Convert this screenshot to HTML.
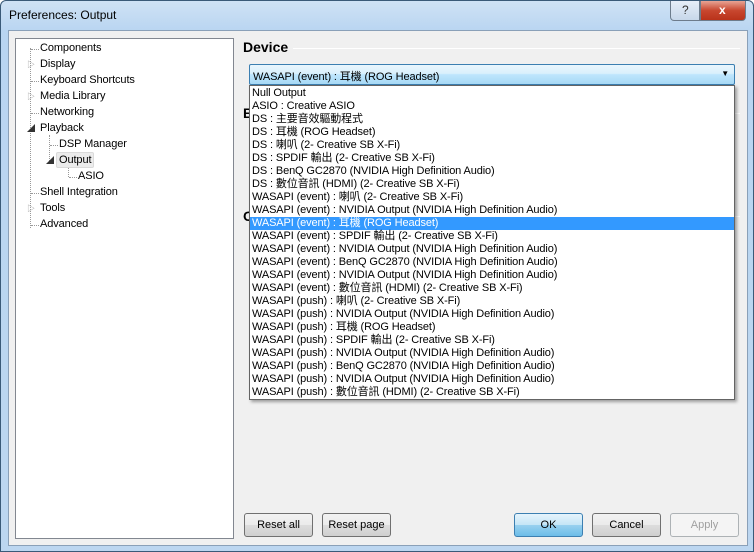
<!DOCTYPE html>
<html><head><meta charset="utf-8"><style>
*{margin:0;padding:0;box-sizing:border-box}
body{width:754px;height:552px;overflow:hidden;background:#fff;font-family:"Liberation Sans","Noto Sans CJK TC",sans-serif;font-size:11px;color:#000;position:relative}
.win{position:absolute;left:0;top:0;width:754px;height:552px;border:1px solid #3a5a78;border-radius:6px 6px 0 0;background:linear-gradient(#cfe2f5,#b9d5f1 30px,#bcd6f0)}
.title{position:absolute;left:8px;top:7px;font-size:12px;color:#000}
.client{position:absolute;left:7px;top:29px;width:740px;height:516px;background:#f0f0f0;border:1px solid #8aa0b8}
.tree{position:absolute;left:14px;top:37px;width:219px;height:501px;background:#fff;border:1px solid #828790}
.ti{position:absolute;font-size:11px;white-space:nowrap;letter-spacing:-0.1px}
.dot{position:absolute;border-top:1px dotted #999}
.vd{position:absolute;border-left:1px dotted #999}
.tri{position:absolute;font-size:8px;color:#999}
h3{position:absolute;font-size:14px;font-weight:bold}
.hl{position:absolute;height:1px;background:#c8c8c8;border-bottom:1px solid #fff}
.combo{position:absolute;left:248px;top:63px;width:486px;height:21px;border:1px solid #3c7fb1;border-radius:2px;background:linear-gradient(#eaf6fd,#d9f0fc 45%,#bee6fd 50%,#a7d9f5);font-size:11px;padding:3px 0 0 3px;letter-spacing:-0.12px}
.list{position:absolute;left:248px;top:84px;width:486px;height:315px;background:#fff;border:1px solid #646464;box-shadow:2px 2px 3px rgba(0,0,0,.35);padding-top:1px}
.list div{height:13px;line-height:13px;padding-left:2px;font-size:11px;white-space:nowrap;letter-spacing:-0.12px}
.list .sel{background:#3399ff;color:#fff}
.btn{position:absolute;top:512px;width:69px;height:24px;border:1px solid #707070;border-radius:3px;background:linear-gradient(#f2f2f2,#ebebeb 50%,#dddddd 51%,#cfcfcf);text-align:center;line-height:22px;font-size:11px}
.cap{position:absolute;top:0;height:20px;border:1px solid #6d7c8c;border-top:none}
</style></head><body>
<div class="win">
<div class="title">Preferences: Output</div>
<div class="cap" style="left:669px;width:30px;border-radius:0 0 0 4px;background:linear-gradient(#e6eef8,#c7d7ea)"><span style="position:absolute;left:11px;top:2px;font-size:12px;color:#333">?</span></div>
<div class="cap" style="left:699px;width:46px;border-radius:0 0 4px 0;background:linear-gradient(#e8a494,#c8472f 50%,#b9321a)"><span style="position:absolute;left:18px;top:2px;font-size:12px;font-weight:bold;color:#fff">x</span></div>
<div class="client"></div>
<div class="tree">
 <div class="vd" style="left:14px;top:9px;height:180px"></div>
 <div class="vd" style="left:33px;top:96px;height:28px"></div>
 <div class="vd" style="left:52px;top:128px;height:10px"></div>
 <div class="dot" style="left:15px;top:10px;width:8px"></div><div class="ti" style="left:24px;top:3px">Components</div>
 <div class="tri" style="left:11px;top:20px">▷</div><div class="ti" style="left:24px;top:19px">Display</div>
 <div class="dot" style="left:15px;top:42px;width:8px"></div><div class="ti" style="left:24px;top:35px">Keyboard Shortcuts</div>
 <div class="tri" style="left:11px;top:52px">▷</div><div class="ti" style="left:24px;top:51px">Media Library</div>
 <div class="dot" style="left:15px;top:74px;width:8px"></div><div class="ti" style="left:24px;top:67px">Networking</div>
 <div class="tri" style="left:11px;top:84px;color:#333">◢</div><div class="ti" style="left:24px;top:83px">Playback</div>
 <div class="dot" style="left:34px;top:106px;width:8px"></div><div class="ti" style="left:43px;top:99px">DSP Manager</div>
 <div class="tri" style="left:30px;top:116px;color:#333">◢</div><div class="ti" style="left:40px;top:113px;background:#ececec;border:1px solid #dadada;border-radius:2px;padding:1px 2px">Output</div>
 <div class="dot" style="left:53px;top:138px;width:8px"></div><div class="ti" style="left:62px;top:131px">ASIO</div>
 <div class="dot" style="left:15px;top:154px;width:8px"></div><div class="ti" style="left:24px;top:147px">Shell Integration</div>
 <div class="tri" style="left:11px;top:164px">▷</div><div class="ti" style="left:24px;top:163px">Tools</div>
 <div class="dot" style="left:15px;top:186px;width:8px"></div><div class="ti" style="left:24px;top:179px">Advanced</div>
</div>
<h3 style="left:242px;top:38px">Device</h3>
<div class="hl" style="left:292px;top:47px;width:447px"></div>
<h3 style="left:242px;top:104px">B</h3>
<div class="hl" style="left:734px;top:112px;width:5px"></div>
<h3 style="left:242px;top:207px">O</h3>
<div class="hl" style="left:734px;top:215px;width:5px"></div>
<div class="combo">WASAPI (event) : 耳機 (ROG Headset)<span style="position:absolute;right:5px;top:4px;font-size:8px">▼</span></div>
<div class="list">
<div>Null Output</div>
<div>ASIO : Creative ASIO</div>
<div>DS : 主要音效驅動程式</div>
<div>DS : 耳機 (ROG Headset)</div>
<div>DS : 喇叭 (2- Creative SB X-Fi)</div>
<div>DS : SPDIF 輸出 (2- Creative SB X-Fi)</div>
<div>DS : BenQ GC2870 (NVIDIA High Definition Audio)</div>
<div>DS : 數位音訊 (HDMI) (2- Creative SB X-Fi)</div>
<div>WASAPI (event) : 喇叭 (2- Creative SB X-Fi)</div>
<div>WASAPI (event) : NVIDIA Output (NVIDIA High Definition Audio)</div>
<div class="sel">WASAPI (event) : 耳機 (ROG Headset)</div>
<div>WASAPI (event) : SPDIF 輸出 (2- Creative SB X-Fi)</div>
<div>WASAPI (event) : NVIDIA Output (NVIDIA High Definition Audio)</div>
<div>WASAPI (event) : BenQ GC2870 (NVIDIA High Definition Audio)</div>
<div>WASAPI (event) : NVIDIA Output (NVIDIA High Definition Audio)</div>
<div>WASAPI (event) : 數位音訊 (HDMI) (2- Creative SB X-Fi)</div>
<div>WASAPI (push) : 喇叭 (2- Creative SB X-Fi)</div>
<div>WASAPI (push) : NVIDIA Output (NVIDIA High Definition Audio)</div>
<div>WASAPI (push) : 耳機 (ROG Headset)</div>
<div>WASAPI (push) : SPDIF 輸出 (2- Creative SB X-Fi)</div>
<div>WASAPI (push) : NVIDIA Output (NVIDIA High Definition Audio)</div>
<div>WASAPI (push) : BenQ GC2870 (NVIDIA High Definition Audio)</div>
<div>WASAPI (push) : NVIDIA Output (NVIDIA High Definition Audio)</div>
<div>WASAPI (push) : 數位音訊 (HDMI) (2- Creative SB X-Fi)</div>
</div>
<div class="btn" style="left:243px">Reset all</div>
<div class="btn" style="left:321px">Reset page</div>
<div class="btn" style="left:513px;border-color:#3c7fb1;background:linear-gradient(#e5f4fc,#c4e5f6 50%,#98d1ef 51%,#6cbce8)">OK</div>
<div class="btn" style="left:591px">Cancel</div>
<div class="btn" style="left:669px;color:#a0a0a0;border-color:#adb2b5;background:#f4f4f4">Apply</div>
</div>
</body></html>
